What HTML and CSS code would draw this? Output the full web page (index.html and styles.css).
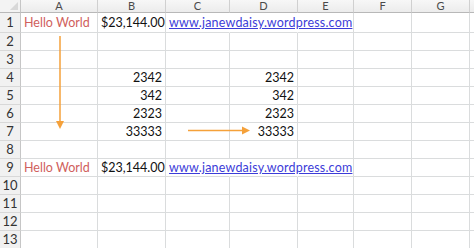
FILE: index.html
```html
<!DOCTYPE html>
<html>
<head>
    <meta charset="utf-8">
    <title>Sheet1</title>
    <link rel="stylesheet" href="styles.css">
</head>
<body>
<div id="sheet">
    <div class="corner"><span class="tri"></span></div>
    <div class="colhead">A</div>
    <div class="colhead">B</div>
    <div class="colhead">C</div>
    <div class="colhead">D</div>
    <div class="colhead">E</div>
    <div class="colhead">F</div>
    <div class="colhead">G</div>
    <div class="colhead last"></div>

    <div class="rowhead first">1</div>
    <div class="cell first red">Hello World</div>
    <div class="cell first num money">$23,144.00</div>
    <div class="cell first link wide">www.janewdaisy.wordpress.com</div>
    <div class="cell first spill"></div>
    <div class="cell first"></div>
    <div class="cell first"></div>
    <div class="cell first"></div>
    <div class="cell first last"></div>

    <div class="rowhead">2</div>
    <div class="cell"></div><div class="cell"></div><div class="cell"></div><div class="cell"></div>
    <div class="cell"></div><div class="cell"></div><div class="cell"></div><div class="cell last"></div>

    <div class="rowhead">3</div>
    <div class="cell"></div><div class="cell"></div><div class="cell"></div><div class="cell"></div>
    <div class="cell"></div><div class="cell"></div><div class="cell"></div><div class="cell last"></div>

    <div class="rowhead">4</div>
    <div class="cell"></div><div class="cell num">2342</div><div class="cell"></div><div class="cell num">2342</div>
    <div class="cell"></div><div class="cell"></div><div class="cell"></div><div class="cell last"></div>

    <div class="rowhead">5</div>
    <div class="cell"></div><div class="cell num">342</div><div class="cell"></div><div class="cell num">342</div>
    <div class="cell"></div><div class="cell"></div><div class="cell"></div><div class="cell last"></div>

    <div class="rowhead">6</div>
    <div class="cell"></div><div class="cell num">2323</div><div class="cell"></div><div class="cell num">2323</div>
    <div class="cell"></div><div class="cell"></div><div class="cell"></div><div class="cell last"></div>

    <div class="rowhead">7</div>
    <div class="cell"></div><div class="cell num">33333</div><div class="cell"></div><div class="cell num">33333</div>
    <div class="cell"></div><div class="cell"></div><div class="cell"></div><div class="cell last"></div>

    <div class="rowhead">8</div>
    <div class="cell"></div><div class="cell"></div><div class="cell"></div><div class="cell"></div>
    <div class="cell"></div><div class="cell"></div><div class="cell"></div><div class="cell last"></div>

    <div class="rowhead">9</div>
    <div class="cell red">Hello World</div>
    <div class="cell num money">$23,144.00</div>
    <div class="cell link wide">www.janewdaisy.wordpress.com</div>
    <div class="cell spill"></div><div class="cell"></div><div class="cell"></div><div class="cell"></div><div class="cell last"></div>

    <div class="rowhead">10</div>
    <div class="cell"></div><div class="cell"></div><div class="cell"></div><div class="cell"></div>
    <div class="cell"></div><div class="cell"></div><div class="cell"></div><div class="cell last"></div>

    <div class="rowhead">11</div>
    <div class="cell"></div><div class="cell"></div><div class="cell"></div><div class="cell"></div>
    <div class="cell"></div><div class="cell"></div><div class="cell"></div><div class="cell last"></div>

    <div class="rowhead">12</div>
    <div class="cell"></div><div class="cell"></div><div class="cell"></div><div class="cell"></div>
    <div class="cell"></div><div class="cell"></div><div class="cell"></div><div class="cell last"></div>

    <div class="rowhead">13</div>
    <div class="cell"></div><div class="cell"></div><div class="cell"></div><div class="cell"></div>
    <div class="cell"></div><div class="cell"></div><div class="cell"></div><div class="cell last"></div>

    <!-- arrows drawn over the grid -->
    <svg class="arrows" width="474" height="248" viewBox="0 0 474 248">
        <line x1="60" y1="36" x2="60" y2="122" stroke="#f5a13a" stroke-width="1.5"/>
        <polygon points="56,121 64,121 60,129" fill="#f5a13a"/>
        <line x1="188" y1="130.5" x2="243" y2="130.5" stroke="#f5a13a" stroke-width="1.5"/>
        <polygon points="242,126.5 242,134.5 250,130.5" fill="#f5a13a"/>
    </svg>
</div>
</body>
</html>
```

FILE: styles.css
```css
body {
    margin: 0;
    background-color: white;
    font-family: "Lato", "Liberation Sans", sans-serif;
}

#sheet {
    position: relative;
    display: grid;
    grid-template-columns: 21px 77px 68px 64px 68px 56px 58px 58px 1fr;
    grid-template-rows: 13px 20px repeat(12, 18px);
    width: 474px;
    height: 248px;
    overflow: hidden;
}

#sheet > div {
    box-sizing: border-box;
    border-right: 1px solid #dadcdd;
    border-bottom: 1px solid #dadcdd;
    min-width: 0;
}

.corner {
    position: relative;
    background-color: #f3f3f3;
    border-right-color: #c6c6c6 !important;
    border-bottom-color: #b8b8b8 !important;
}

.corner .tri {
    position: absolute;
    right: 2px;
    bottom: 2px;
    width: 0;
    height: 0;
    border-left: 8px solid transparent;
    border-bottom: 8px solid #d8d8d8;
}

.colhead {
    background: linear-gradient(#f7f7f7, #ececec);
    border-right-color: #d0d0d0 !important;
    border-bottom-color: #b8b8b8 !important;
    color: #4a4a4a;
    font-size: 11px;
    line-height: 12px;
    text-align: center;
}

.rowhead {
    background-color: #f1f1f1;
    border-right-color: #c6c6c6 !important;
    border-bottom-color: #d8d8d8 !important;
    color: #333;
    font-size: 13px;
    line-height: 17px;
    text-align: center;
}

.rowhead.first {
    line-height: 19px;
}

.cell {
    font-size: 12.5px;
    line-height: 17px;
    color: #111;
    padding: 0 3px;
    white-space: nowrap;
}

.cell.first {
    line-height: 19px;
}

.wide {
    overflow: visible;
    border-right-color: transparent !important;
    z-index: 1;
}

.spill {
    border-right-color: transparent !important;
}

.num {
    text-align: right;
}

.money {
    padding-right: 6px;
}

.red {
    color: #d0605c;
}

.link {
    color: #3c3cd8;
    text-decoration: underline;
    letter-spacing: 0.2px;
}

.arrows {
    position: absolute;
    left: 0;
    top: 0;
    pointer-events: none;
}
```
